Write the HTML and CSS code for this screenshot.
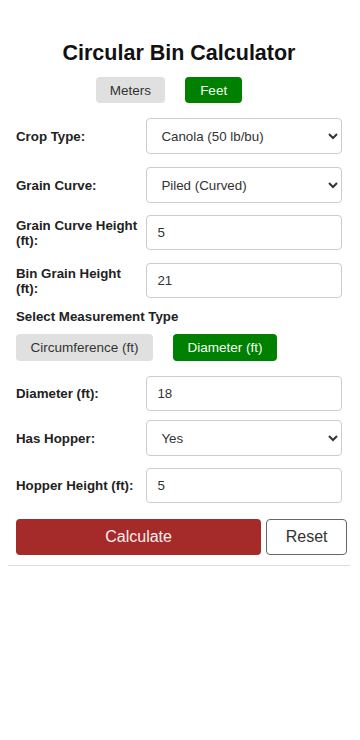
FILE: index.html
```html
<!DOCTYPE html>
<html>
<head>
<meta charset="utf-8">
<link rel="stylesheet" href="styles.css">
</head>
<body>
<div class="calc">
  <h1 class="title">Circular Bin Calculator</h1>
  <div class="units">
    <button class="toggle off">Meters</button>
    <button class="toggle on">Feet</button>
  </div>

  <div class="row r-crop">
    <label class="lbl">Crop Type:</label>
    <select class="field sel"><option>Canola (50 lb/bu)</option></select>
  </div>
  <div class="row r-curve">
    <label class="lbl">Grain Curve:</label>
    <select class="field sel"><option>Piled (Curved)</option></select>
  </div>
  <div class="row r-gch">
    <label class="lbl">Grain Curve Height (ft):</label>
    <input class="field inp" type="text" value="5">
  </div>
  <div class="row r-bgh">
    <label class="lbl">Bin Grain Height (ft):</label>
    <input class="field inp" type="text" value="21">
  </div>

  <div class="mtitle">Select Measurement Type</div>
  <div class="mtypes">
    <button class="toggle mt off">Circumference (ft)</button>
    <button class="toggle mt on">Diameter (ft)</button>
  </div>

  <div class="row r-dia">
    <label class="lbl">Diameter (ft):</label>
    <input class="field inp" type="text" value="18">
  </div>
  <div class="row r-hop">
    <label class="lbl">Has Hopper:</label>
    <select class="field sel"><option>Yes</option></select>
  </div>
  <div class="row r-hh">
    <label class="lbl">Hopper Height (ft):</label>
    <input class="field inp" type="text" value="5">
  </div>

  <div class="actions">
    <button class="btn-calc">Calculate</button>
    <button class="btn-reset">Reset</button>
  </div>
</div>
<hr class="sep">
</body>
</html>
```
FILE: styles.css
```css
html, body {
  background: #fff;
}
body {
  margin: 8px;
  font-family: "Liberation Sans", Arial, sans-serif;
  color: #222;
}
.calc {
  padding: 0 10px 0 8px;
}
.title {
  margin: 34px 0 0;
  font-size: 21.5px;
  line-height: 23px;
  font-weight: bold;
  text-align: center;
  color: #111;
}
.units {
  display: flex;
  justify-content: center;
  margin-top: 12px;
}
.toggle {
  font-family: "Liberation Sans", Arial, sans-serif;
  font-size: 13.5px;
  height: 26px;
  padding: 0 14px;
  margin-right: 20px;
  border: none;
  border-radius: 4px;
  cursor: pointer;
}
.toggle.off {
  background: #e0e0e0;
  color: #333;
}
.toggle.on {
  background: #008000;
  color: #f4fff4;
}
.units .on {
  padding: 0 15px;
}
.row {
  display: flex;
  align-items: center;
}
.lbl {
  flex: 0 0 40%;
  box-sizing: border-box;
  padding-right: 4px;
  font-size: 13.3px;
  font-weight: bold;
  line-height: 15px;
  color: #222;
}
.field {
  flex: 1;
  min-width: 0;
  box-sizing: border-box;
  font-family: "Liberation Sans", Arial, sans-serif;
  font-size: 13.33px;
  color: #333;
  background: #fff;
  border: 1px solid #ccc;
  border-radius: 4px;
}
.sel {
  height: 36px;
  padding: 0 6px 0 10px;
}
.inp {
  height: 35px;
  padding: 0 10px;
}
.r-crop { margin-top: 15px; }
.r-curve { margin-top: 13px; }
.r-gch { margin-top: 12px; }
.r-bgh { margin-top: 13px; }
.mtitle {
  margin-top: 11px;
  font-size: 13.3px;
  font-weight: bold;
  line-height: 15px;
  color: #222;
}
.mtypes {
  display: flex;
  margin-top: 10px;
}
.toggle.mt {
  height: 27px;
  padding: 0 14.5px;
}
.r-dia { margin-top: 15px; }
.r-hop { margin-top: 9px; }
.r-hh { margin-top: 12px; }
.actions {
  display: flex;
  gap: 5px;
  margin-top: 16px;
  margin-right: -5px;
}
.btn-calc {
  flex: 1;
  height: 36px;
  font-family: "Liberation Sans", Arial, sans-serif;
  font-size: 16px;
  color: #fbeeee;
  background: #a52a2a;
  border: none;
  border-radius: 4px;
}
.btn-reset {
  flex: 0 0 auto;
  height: 36px;
  padding: 0 18.5px;
  font-family: "Liberation Sans", Arial, sans-serif;
  font-size: 16px;
  color: #333;
  background: #fff;
  border: 1px solid #666;
  border-radius: 4px;
}
.sep {
  margin: 10px 2px 0 0;
  border: none;
  border-top: 1px solid #ddd;
  height: 0;
}
```
